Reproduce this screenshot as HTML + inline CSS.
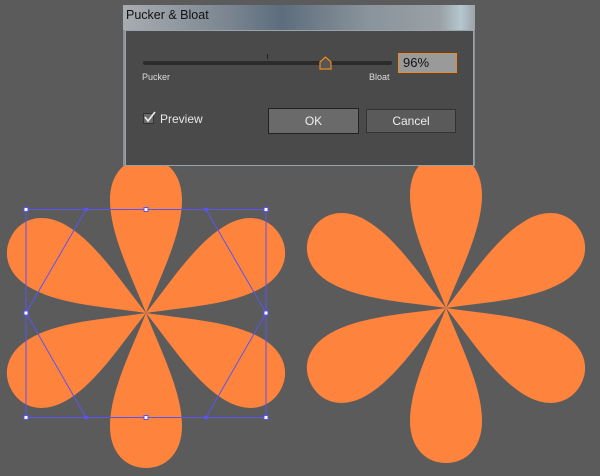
<!DOCTYPE html>
<html><head><style>
body{margin:0;width:600px;height:476px;background:#5b5b5b;position:relative;overflow:hidden;font-family:"Liberation Sans",sans-serif}
.abs{position:absolute}
</style></head><body>
<svg class="abs" style="left:0;top:0" width="600" height="476">
<defs>
<path id="p" d="M0,0 C-14,-36 -36,-78 -36,-113 C-36,-140 -20,-155 0,-155 C20,-155 36,-140 36,-113 C36,-78 14,-36 0,0 Z" fill="#fe843e"/>
</defs>
<g transform="translate(146,313)">
<use href="#p"/><use href="#p" transform="rotate(60)"/><use href="#p" transform="rotate(120)"/><use href="#p" transform="rotate(180)"/><use href="#p" transform="rotate(240)"/><use href="#p" transform="rotate(300)"/>
</g>
<g transform="translate(446,308)">
<use href="#p"/><use href="#p" transform="rotate(60)"/><use href="#p" transform="rotate(120)"/><use href="#p" transform="rotate(180)"/><use href="#p" transform="rotate(240)"/><use href="#p" transform="rotate(300)"/>
</g>
<g stroke="#5a55f0" stroke-width="1" fill="none">
<rect x="26" y="209.5" width="240" height="208"/>
<path d="M86,209.5 L206,209.5 L266,313 L206,417.5 L86,417.5 L26,313 Z"/>
</g>
<g fill="#fff" stroke="#5a55f0">
<rect x="24" y="207.5" width="4" height="4"/><rect x="144" y="207.5" width="4" height="4"/><rect x="264" y="207.5" width="4" height="4"/>
<rect x="24" y="311" width="4" height="4"/><rect x="264" y="311" width="4" height="4"/>
<rect x="24" y="415.5" width="4" height="4"/><rect x="144" y="415.5" width="4" height="4"/><rect x="264" y="415.5" width="4" height="4"/>
</g>
<g fill="#5a55f0"><circle cx="86" cy="209.5" r="2"/><circle cx="206" cy="209.5" r="2"/><circle cx="86" cy="417.5" r="2"/><circle cx="206" cy="417.5" r="2"/></g>
</svg>
<div class="abs" style="left:123px;top:5px;width:352px;height:161px;background:#8d9094"></div>
<div class="abs" style="left:123px;top:5px;width:352px;height:25px;background:linear-gradient(90deg,#a9adb1 0%,#7a8591 30%,#5d6d7d 45%,#8a949c 70%,#9aa0a6 90%,#b5c7cf 96%,#9da3a8 100%)"></div>
<div class="abs" style="left:126px;top:8px;font-size:12.5px;color:#111">Pucker &amp; Bloat</div>
<div class="abs" style="left:125px;top:30px;width:347px;height:134px;background:#4a4a4a;border:1px solid #9aa3aa"></div>
<div class="abs" style="left:143px;top:61px;width:249px;height:4px;background:#2c2c2c;border-radius:2px"></div>
<div class="abs" style="left:267px;top:54px;width:1px;height:5px;background:#222"></div>
<svg class="abs" style="left:319px;top:56px" width="13" height="14"><path d="M1,6 L6.5,1 L12,6 L12,13 L1,13 Z" fill="#555" stroke="#f08a1c" stroke-width="1.2"/></svg>
<div class="abs" style="left:142px;top:72px;font-size:9px;color:#ddd">Pucker</div>
<div class="abs" style="left:369px;top:72px;font-size:9px;color:#ddd">Bloat</div>
<div class="abs" style="left:398px;top:53px;width:57px;height:18px;background:#9a9a9a;border:1px solid #f08a1c"></div>
<div class="abs" style="left:403px;top:55px;font-size:13px;color:#111">96%</div>
<div class="abs" style="left:143px;top:113px;width:9px;height:9px;background:#6a6a6a;border:1px solid #333"></div>
<svg class="abs" style="left:143px;top:110px" width="14" height="14"><path d="M2,7 L5,11 L12,2" fill="none" stroke="#eee" stroke-width="1.6"/></svg>
<div class="abs" style="left:160px;top:112px;font-size:12px;color:#e8e8e8">Preview</div>
<div class="abs" style="left:268px;top:108px;width:89px;height:24px;background:#6a6a6a;border:1px solid #222;color:#eee;font-size:12px;text-align:center;line-height:24px">OK</div>
<div class="abs" style="left:366px;top:109px;width:88px;height:22px;background:#5a5a5a;border:1px solid #333;color:#eee;font-size:12px;text-align:center;line-height:22px">Cancel</div>
</body></html>
